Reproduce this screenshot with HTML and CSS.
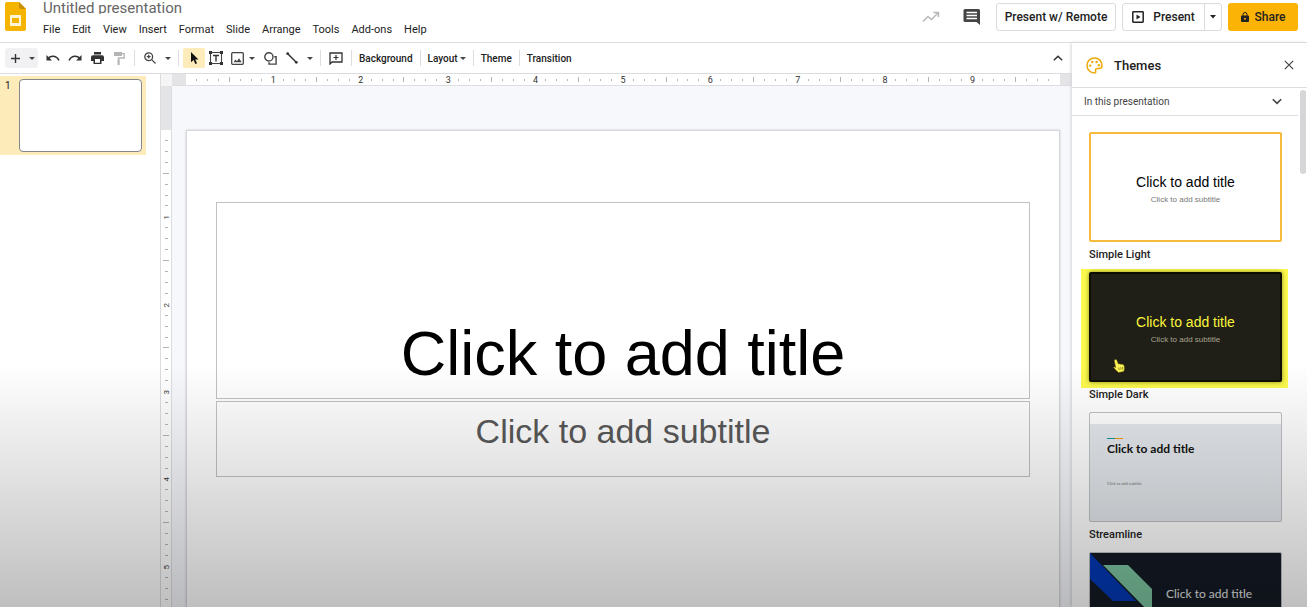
FILE: index.html
```html
<!DOCTYPE html>
<html lang="en">
<head>
<meta charset="utf-8">
<title>Untitled presentation</title>
<link rel="stylesheet" href="styles.css">
</head>
<body>
<div class="app">
  <header class="header">
    <svg class="logo" viewBox="0 0 21 29" aria-label="Slides"><path fill="#f4b400" d="M2 0h12l7 7v20a2 2 0 0 1-2 2H2a2 2 0 0 1-2-2V2a2 2 0 0 1 2-2z"/><path fill="#c98d08" d="M14 0l7 7h-5a2 2 0 0 1-2-2z"/><path fill="#fff4d6" fill-rule="evenodd" d="M5 13h11v11H5zm2 3v5h7v-5z"/></svg>
    <div class="doc">
      <input class="doc-title" aria-label="Document title" value="Untitled presentation">
      <nav class="menus">
        <button>File</button><button>Edit</button><button>View</button><button>Insert</button><button>Format</button><button>Slide</button><button>Arrange</button><button>Tools</button><button>Add-ons</button><button>Help</button>
      </nav>
    </div>
    <div class="actions">
      <button class="plain" aria-label="Activity"><svg width="18" height="12" viewBox="0 0 18 12"><path d="M1 10.500l5-5 3.500 3L16 2M11.500 1.500h5v4.500" fill="none" stroke="#b8b8b8" stroke-width="1.500"/></svg></button>
      <button class="plain comments" aria-label="Comments"><svg width="17" height="16" viewBox="0 0 17 16"><path fill="#444" d="M2 0h13.500A1.500 1.500 0 0 1 17 1.500V16l-3.500-3H2a1.500 1.500 0 0 1-1.500-1.500v-10A1.500 1.500 0 0 1 2 0z"/><path stroke="#fff" stroke-width="1.300" d="M3.500 3.500h10.500M3.500 6.500h10.500M3.500 9.500h10.500"/></svg></button>
      <button class="outlined">Present w/ Remote</button>
      <div class="split">
        <button class="present"><svg width="12" height="12" viewBox="0 0 12 12"><rect x=".8" y=".8" width="10.400" height="10.400" rx=".6" fill="none" stroke="#222" stroke-width="1.500"/><path d="M4.500 3.500v5L8.500 6z" fill="#222"/></svg>Present</button>
        <button class="present-more" aria-label="Present options"><svg width="6" height="4" viewBox="0 0 6 4"><path d="M0 0h6L3 3.500z" fill="#222"/></svg></button>
      </div>
      <button class="share"><svg width="8" height="10" viewBox="0 0 8 10"><path fill="#222" fill-rule="evenodd" d="M1 3.500h6a1 1 0 0 1 1 1V9a1 1 0 0 1-1 1H1a1 1 0 0 1-1-1V4.500a1 1 0 0 1 1-1zm3 2.200a1 1 0 1 0 0 2 1 1 0 0 0 0-2z"/><path d="M2 4V2.500a2 2 0 0 1 4 0V4" fill="none" stroke="#222"/></svg>Share</button>
    </div>
  </header>

  <div class="body">
    <main class="editor">
      <div class="toolbar">
        <div class="new">
          <button class="tool narrow" aria-label="New slide"><svg width="9" height="9" viewBox="0 0 9 9"><path d="M4.500 0v9M0 4.500h9" stroke="#333" stroke-width="1.400"/></svg></button>
          <button class="caret" aria-label="New slide layout"></button>
        </div>
        <button class="tool" aria-label="Undo"><svg width="14" height="8" viewBox="0 0 14 8"><path fill="none" stroke="#333" stroke-width="1.500" d="M2 4.500C5 1.300 10.500 1.300 13 6.500"/><path fill="#333" d="M.5 1v5.500H6z"/></svg></button>
        <button class="tool" aria-label="Redo"><svg width="14" height="8" viewBox="0 0 14 8"><path fill="none" stroke="#333" stroke-width="1.500" d="M12 4.500C9 1.300 3.500 1.300 1 6.500"/><path fill="#333" d="M13.500 1v5.500H8z"/></svg></button>
        <button class="tool" aria-label="Print"><svg width="13" height="12" viewBox="0 0 13 12"><path fill="#333" fill-rule="evenodd" d="M3 0h7v2.500H3zM2 3.200h9a2 2 0 0 1 2 2V9h-2.500v3h-8V9H0V5.200a2 2 0 0 1 2-2zM4 7v3.700h5V7z"/></svg></button>
        <button class="tool" aria-label="Paint format"><svg width="12" height="13" viewBox="0 0 12 13"><path fill="#b5b5b5" d="M1 0h8v4H1z"/><path fill="none" stroke="#b5b5b5" stroke-width="1.300" d="M9 1.700h2.200V6H5.500v2"/><path fill="#b5b5b5" d="M4.500 7.500h2.200V13H4.500z"/></svg></button>
        <span class="sep"></span>
        <button class="tool" aria-label="Zoom"><svg width="12" height="12" viewBox="0 0 12 12"><circle cx="4.700" cy="4.700" r="3.900" fill="none" stroke="#444" stroke-width="1.300"/><path d="M7.700 7.700l3.800 3.800M4.700 2.800v3.800M2.800 4.700h3.800" stroke="#444" stroke-width="1.200"/></svg></button>
        <button class="caret" aria-label="Zoom levels"></button>
        <span class="sep"></span>
        <button class="tool active" aria-label="Select"><svg width="9" height="12" viewBox="0 0 9 12"><path fill="#111" d="M1 0l7.500 7.400H5.200l1.900 3.900-1.800.7-1.700-3.900L1 10.300z"/></svg></button>
        <button class="tool" aria-label="Text box"><svg width="14" height="14" viewBox="0 0 14 14"><rect x="1.500" y="1.500" width="11" height="11" fill="none" stroke="#444" stroke-width="1.100"/><path fill="#333" d="M0 0h3v3H0zM11 0h3v3h-3zM0 11h3v3H0zM11 11h3v3h-3z"/><path d="M4 4.500h6M7 4.500v6" stroke="#333" stroke-width="1.400"/></svg></button>
        <button class="tool narrow" aria-label="Insert image"><svg width="13" height="13" viewBox="0 0 13 13"><rect x=".7" y=".7" width="11.600" height="11.600" rx="1" fill="none" stroke="#444" stroke-width="1.300"/><path fill="#444" d="M2.500 10.300l2-2.800 1.500 1.700 2-3 2.700 4.100z"/></svg></button>
        <button class="caret slim" aria-label="Image options"></button>
        <button class="tool" aria-label="Shape"><svg width="13" height="13" viewBox="0 0 13 13"><circle cx="4.900" cy="4.900" r="4.100" fill="none" stroke="#444" stroke-width="1.400"/><path fill="none" stroke="#444" stroke-width="1.400" d="M10.300 4.700h1.800v7.400H5V10.300"/></svg></button>
        <button class="tool" aria-label="Line"><svg width="12" height="12" viewBox="0 0 12 12"><path d="M1.500 1.500l9 9" stroke="#333" stroke-width="1.500"/><circle cx="1.700" cy="1.700" r="1.400" fill="#333"/><circle cx="10.300" cy="10.300" r="1.400" fill="#333"/></svg></button>
        <button class="caret" aria-label="Line options"></button>
        <span class="sep"></span>
        <button class="tool" aria-label="Add comment"><svg width="14" height="13" viewBox="0 0 14 13"><path fill="none" stroke="#333" stroke-width="1.300" d="M1 12V1h12v9H3z"/><path d="M7 3v5M4.500 5.500h5" stroke="#333" stroke-width="1.200"/></svg></button>
        <span class="sep"></span>
        <button class="text-tool">Background</button>
        <span class="sep"></span>
        <button class="text-tool">Layout<i class="arrow"></i></button>
        <span class="sep"></span>
        <button class="text-tool">Theme</button>
        <span class="sep"></span>
        <button class="text-tool">Transition</button>
        <button class="tool collapse" aria-label="Hide the menus"><svg width="10" height="6" viewBox="0 0 10 6"><path d="M.8 5.300L5 1.200l4.200 4.100" fill="none" stroke="#333" stroke-width="1.500"/></svg></button>
      </div>

      <div class="workspace">
        <aside class="filmstrip">
          <div class="film-item"><span class="film-number">1</span><button class="film-thumb" aria-label="Slide 1"></button></div>
        </aside>
        <div class="stage">
          <div class="ruler-corner"></div>
          <div class="ruler ruler-x" data-inches="10"></div>
          <div class="ruler ruler-y" data-inches="6"></div>
          <div class="canvas">
            <section class="slide">
              <div class="placeholder title">Click to add title</div>
              <div class="placeholder subtitle">Click to add subtitle</div>
            </section>
          </div>
        </div>
      </div>
    </main>

    <aside class="themes">
      <div class="themes-head">
        <svg width="17" height="17" viewBox="0 0 17 17"><path fill="none" stroke="#efa90c" stroke-width="1.500" d="M8.500 1C4.300 1 1 4.200 1 8.400S4.300 16 8.400 16c1.100 0 1.500-.8 1.300-1.600-.5-1.500-.3-2.900 1.400-2.900h2c1.800 0 2.900-1.200 2.900-3C16 4.200 12.700 1 8.500 1z"/><g fill="#efa90c"><circle cx="4.200" cy="8.600" r="1.200"/><circle cx="6.300" cy="5" r="1.200"/><circle cx="10.600" cy="5" r="1.200"/><circle cx="12.900" cy="8.300" r="1.200"/></g></svg>
        <h2>Themes</h2>
        <button class="plain" aria-label="Close"><svg width="10" height="10" viewBox="0 0 10 10"><path d="M.8.8l8.400 8.400M9.200.8L.8 9.200" stroke="#444" stroke-width="1.200"/></svg></button>
      </div>
      <div class="themes-scroll">
        <div class="themes-main">
          <button class="section">In this presentation<svg width="10" height="7" viewBox="0 0 10 7"><path d="M.8 1.200L5 5.400l4.200-4.200" fill="none" stroke="#444" stroke-width="1.600"/></svg></button>
          <div class="theme-list">
            <figure>
              <div class="card light"><p class="t">Click to add title</p><p class="s">Click to add subtitle</p></div>
              <figcaption>Simple Light</figcaption>
            </figure>
            <figure class="hovered">
              <div class="card dark"><p class="t">Click to add title</p><p class="s">Click to add subtitle</p>
                <svg class="hand" width="12" height="14" viewBox="0 0 12 14"><path fill="#fff35a" stroke="#6b6500" stroke-width=".5" d="M2.300.6c.8-.3 1.400.1 1.700.9l1.300 3.600 1-.3.900.5 1-.3.9.6 1-.1.900.8.500 3.400-.8 2.800-5.300 1-2.600-2.600L.5 8.500c.4-.8 1.300-.7 2.200.1L1.400 2C1.200 1.300 1.600.8 2.300.6z"/><path stroke="#6b6500" stroke-width=".7" d="M5.800 8.500l.4 2.500M7.700 8.200l.4 2.500M9.500 8l.3 2.500"/></svg>
              </div>
              <figcaption>Simple Dark</figcaption>
            </figure>
            <figure>
              <div class="card streamline"><span class="accent"></span><p class="t">Click to add title</p><p class="s">Click to add subtitle</p></div>
              <figcaption>Streamline</figcaption>
            </figure>
            <figure>
              <div class="card focus">
                <svg class="bands" width="62" height="108" viewBox="0 0 62 108"><path fill="#0239b5" d="M0 0l46 48H23L0 26z"/><path fill="#7cc4a0" d="M13 12h25l24 24v26z"/></svg>
                <p class="t">Click to add title</p>
              </div>
            </figure>
          </div>
        </div>
        <div class="track"><div class="thumb"></div></div>
      </div>
    </aside>
  </div>
  <div class="shade"></div>
</div>
<script src="ruler.js"></script>
</body>
</html>
```
FILE: styles.css
```css
:root {
  --inch: calc((100vw - 433px) / 10);
  --line: #dcdde0;
  --ui: Roboto, "Liberation Sans", sans-serif;
}

* { box-sizing: border-box; }

body {
  margin: 0;
  font-family: var(--ui);
  color: #222;
  background: #fff;
}

button {
  font: inherit;
  color: inherit;
  border: 0;
  padding: 0;
  background: none;
  display: flex;
  align-items: center;
  justify-content: center;
}

svg { display: block; flex: none; }
p, h2, figure { margin: 0; }

.app {
  height: 100vh;
  display: flex;
  flex-direction: column;
  overflow: hidden;
  position: relative;
}

/* Header */
.header {
  display: flex;
  align-items: flex-start;
  height: 43px;
  padding: 2px 9px 0 5px;
  border-bottom: 1px solid var(--line);
  flex: none;
}
.logo { width: 21px; height: 29px; }
.doc { flex: 1; min-width: 0; padding-left: 17px; }
.doc-title {
  display: block;
  width: 240px;
  height: 12px;
  padding: 0;
  border: 0;
  font: 15px/12px var(--ui);
  color: #666;
  overflow: visible;
}
.menus { display: flex; gap: 12px; padding-top: 8px; font-size: 11px; line-height: 16px; }
.actions { display: flex; align-items: center; height: 29px; font-size: 12px; font-weight: 500; }
.comments { margin: 0 16px 0 23px; }
.outlined, .split, .share { height: 28px; border-radius: 3px; }
.outlined, .split { border: 1px solid #dcdcdc; }
.outlined { width: 120px; }
.split { display: flex; margin: 0 6px; width: 100px; }
.present { flex: 1; gap: 9px; }
.present-more { width: 17px; border-left: 1px solid #dcdcdc; }
.share { width: 70px; gap: 6px; background: #fbb305; }

/* Body */
.body { flex: 1; min-height: 0; display: flex; }
.editor { flex: 1; min-width: 0; display: flex; flex-direction: column; }

.toolbar {
  display: flex;
  align-items: center;
  height: 31px;
  padding: 0 3px 0 5px;
  border-bottom: 1px solid var(--line);
  flex: none;
}
.new { display: flex; background: #f1f1f3; border-radius: 3px; margin-right: 4px; }
.tool { width: 22px; height: 20px; }
.narrow { width: 20px; }
.active { background: #fdebb9; border-radius: 2px; }
.caret { width: 13px; height: 20px; }
.slim { width: 10px; margin-right: 2px; }
.caret::before, .arrow {
  content: "";
  border: 3px solid transparent;
  border-top-color: #444;
  border-bottom: 0;
}
.arrow { margin-left: 2px; }
.sep { width: 1px; height: 16px; margin: 0 4px; background: #dcdde0; }
.text-tool { padding: 0 3px; font-size: 10px; font-weight: 500; }
.collapse { margin-left: auto; }

.workspace { flex: 1; min-height: 0; display: flex; }
.filmstrip { width: 160px; padding-top: 2px; flex: none; }
.film-item {
  display: flex;
  width: 146px;
  padding: 3px 4px 3px 0;
  background: #fdebb9;
}
.film-number { width: 19px; padding-left: 5px; font-size: 10px; line-height: 13px; }
.film-thumb { flex: 1; height: 73px; background: #fff; border: 1px solid #84868c; border-radius: 4px; }

.stage {
  flex: 1;
  min-width: 0;
  display: grid;
  grid-template-columns: 11px 1fr;
  grid-template-rows: 12px 1fr;
  border-left: 1px solid var(--line);
}
.ruler-corner { background: #f5f5f6; }
.ruler { display: flex; background: #e4e4e7; font-size: 9px; color: #333; min-height: 0; overflow: hidden; }
.ruler-x { padding: 0 12px 0 14px; border-bottom: 1px solid var(--line); }
.ruler-y { flex-direction: column; padding-top: 44px; border-right: 1px solid var(--line); font-size: 8px; }
.inch { display: flex; flex: none; background: #fff; }
.ruler-x .inch { width: var(--inch); }
.ruler-y .inch { height: var(--inch); flex-direction: column; }
.cell { flex: 1; min-width: 0; min-height: 0; display: flex; align-items: center; justify-content: flex-end; }
.ruler-y .cell { flex-direction: column; }
.tick { background: #b4b4b8; }
.ruler-x .tick { width: 1px; height: 2px; }
.ruler-x .tick.half { height: 5px; }
.ruler-y .tick { height: 1px; width: 3px; }
.ruler-y .tick.half { width: 6px; }
.num { display: flex; align-items: center; justify-content: center; flex: none; position: relative; z-index: 1; }
.ruler-x .num { width: 0; }
.ruler-y .num { height: 0; }
.ruler-y .num span { writing-mode: vertical-rl; transform: rotate(180deg); }

.canvas { min-height: 0; overflow: hidden; background: #f7f8fc; padding: 44px 12px 0 14px; }
.slide {
  aspect-ratio: 16 / 9;
  background: #fff;
  border: 1px solid #d6d7da;
  box-shadow: 0 0 2px #c8c9cc;
  padding: 71px 29px 0;
  font-family: "Liberation Sans", Arial, sans-serif;
}
.placeholder { border: 1px solid #c2c2c2; display: flex; justify-content: center; }
.title { height: 197px; align-items: flex-end; padding-bottom: 9px; font-size: 63px; line-height: 72px; color: #000; }
.subtitle { height: 76px; margin-top: 2px; padding-top: 9px; font-size: 34px; line-height: 40px; color: #595959; }

/* Themes panel */
.themes {
  width: 235px;
  flex: none;
  display: flex;
  flex-direction: column;
  background: #fff;
  box-shadow: -1px 0 3px #d4d5d8;
  position: relative;
}
.themes-head {
  display: flex;
  align-items: center;
  height: 45px;
  padding: 0 13px 0 14px;
  border-bottom: 1px solid var(--line);
  flex: none;
}
.themes-head h2 { flex: 1; margin-left: 11px; font-size: 13px; font-weight: 500; }
.themes-scroll { flex: 1; min-height: 0; display: flex; overflow: hidden; }
.themes-main { flex: 1; }
.section {
  width: 100%;
  height: 28px;
  justify-content: space-between;
  padding: 0 16px 0 12px;
  border-bottom: 1px solid var(--line);
  font-size: 10px;
  color: #444;
}
.theme-list { display: grid; gap: 4px; padding: 16px 16px 0 17px; }
.card {
  height: 110px;
  border: 1px solid #bfc0c3;
  border-radius: 2px;
  text-align: center;
  position: relative;
  font-family: "Liberation Sans", Arial, sans-serif;
}
.card .t { font-size: 14px; line-height: 16px; }
.card .s { font-size: 8px; line-height: 10px; margin-top: 5px; color: #777; }
.light, .dark { padding-top: 40px; }
.light { border: 2px solid #f6bb3d; color: #000; }
.dark { border: 2px solid #0e0d00; background: #1f1e17; color: #fbf63c; box-shadow: 0 0 4px #8c891c; }
.dark .s { color: #a8a791; }
.hovered { position: relative; }
.hovered::before {
  content: "";
  position: absolute;
  inset: -3px -6px 20px -8px;
  background: #fbf94d;
}
.hand { position: absolute; left: 22px; bottom: 7px; }
figcaption { height: 26px; font-size: 11px; line-height: 26px; font-weight: 500; position: relative; }
.streamline {
  padding: 25px 0 0 17px;
  text-align: left;
  background: linear-gradient(#fff 11px, #e4e8ec 11px);
  font-family: Lato, sans-serif;
  color: #111;
}
.accent { display: block; width: 16px; height: 1px; background: linear-gradient(90deg, #0f93a0 50%, #f29900 50%); }
.streamline .t { margin-top: 2px; font-size: 12px; font-weight: 700; }
.streamline .s { margin-top: 22px; font-size: 4px; }
.focus { background: #141a24; overflow: hidden; padding: 32px 0 0 76px; text-align: left; font-family: Lato, sans-serif; color: #e6e6e6; }
.focus .t { font-size: 12px; line-height: 18px; }
.bands { position: absolute; left: 0; top: 0; }
.track { width: 9px; padding: 2px 1px 0 2px; }
.thumb { height: 84px; background: #d6d6d8; border-radius: 3px; }

/* Fade towards the bottom of the window */
.shade {
  position: absolute;
  inset: 60% 0 0;
  background: linear-gradient(transparent, rgba(0, 0, 0, .25));
  pointer-events: none;
}
```
FILE: ruler.js
```js
document.querySelectorAll(".ruler").forEach(function (ruler) {
  var inches = Number(ruler.dataset.inches);
  for (var n = 1; n <= inches; n++) {
    var inch = document.createElement("div");
    inch.className = "inch";
    for (var i = 1; i <= 8; i++) {
      var cell = document.createElement("div");
      cell.className = "cell";
      if (i < 8) {
        cell.innerHTML = '<i class="tick' + (i === 4 ? " half" : "") + '"></i>';
      } else if (n < inches) {
        cell.innerHTML = '<div class="num"><span>' + n + "</span></div>";
      }
      inch.appendChild(cell);
    }
    ruler.appendChild(inch);
  }
});
```
